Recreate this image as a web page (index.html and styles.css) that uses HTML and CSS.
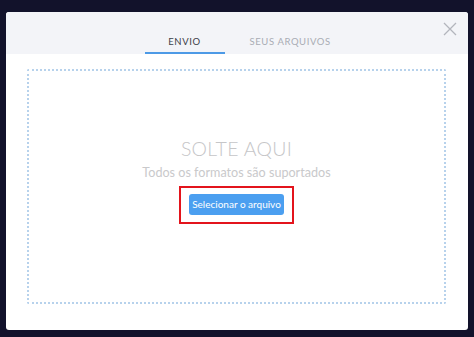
FILE: index.html
```html
<!DOCTYPE html>
<html lang="pt">
<head>
    <meta charset="UTF-8" />
    <meta name="viewport" content="width=device-width, initial-scale=1.0" />
    <title>Envio</title>
    <link rel="stylesheet" href="styles.css">
</head>
<body>
    <div class="modal">
        <div class="modal-header">
            <div class="tabs">
                <div class="tab active">ENVIO</div>
                <div class="tab">SEUS ARQUIVOS</div>
            </div>
            <button class="close" aria-label="Fechar">
                <svg width="14" height="14" viewBox="0 0 14 14">
                    <path d="M1 1L13 13M13 1L1 13" stroke="#b3b5bd" stroke-width="1.3" fill="none" />
                </svg>
            </button>
        </div>
        <div class="modal-body">
            <div class="dropzone">
                <div class="drop-title">SOLTE AQUI</div>
                <div class="drop-sub">Todos os formatos são suportados</div>
                <div class="highlight">
                    <button class="select-btn">Selecionar o arquivo</button>
                </div>
            </div>
        </div>
    </div>
</body>
</html>
```

FILE: styles.css
```css
body {
    margin: 0;
    padding: 12px 6px 7px;
    background-color: #12122b;
    font-family: Lato, "Open Sans", sans-serif;
}

.modal {
    background-color: #fff;
    border-radius: 3px;
    height: 318px;
    display: flex;
    flex-direction: column;
    overflow: hidden;
}

.modal-header {
    position: relative;
    height: 42px;
    background-color: #f3f4f8;
    display: flex;
    justify-content: center;
    align-items: flex-end;
}

.tabs {
    display: flex;
    gap: 25px;
}

.tab {
    width: 80px;
    text-align: center;
    white-space: nowrap;
    font-size: 9.5px;
    letter-spacing: 0.6px;
    color: #a9acb4;
    padding-bottom: 5px;
    border-bottom: 2px solid transparent;
}

.tab.active {
    color: #3d4048;
    border-bottom-color: #4d9ae6;
}

.close {
    position: absolute;
    top: 10px;
    right: 11px;
    border: none;
    background: none;
    padding: 0;
    cursor: pointer;
}

.modal-body {
    flex: 1;
    padding: 15px 22px 26px 21px;
    display: flex;
}

.dropzone {
    flex: 1;
    border: 2px dotted #b7d2ec;
    border-radius: 2px;
    display: flex;
    flex-direction: column;
    align-items: center;
    padding-top: 67px;
}

.drop-title {
    font-size: 19.5px;
    font-weight: 300;
    line-height: 22px;
    color: #c6c6c8;
    letter-spacing: 0.3px;
}

.drop-sub {
    margin-top: 5px;
    font-size: 12.6px;
    line-height: 16px;
    color: #c9c9cb;
}

.highlight {
    margin-top: 5px;
    border: 2px solid #e3141c;
    padding: 4px 8px 7px;
}

.select-btn {
    width: 95px;
    height: 21px;
    border: none;
    border-radius: 3px;
    background-color: #4b9ff0;
    color: #fff;
    font-family: Lato, "Open Sans", sans-serif;
    font-size: 10px;
    padding: 0;
    cursor: pointer;
}
```
